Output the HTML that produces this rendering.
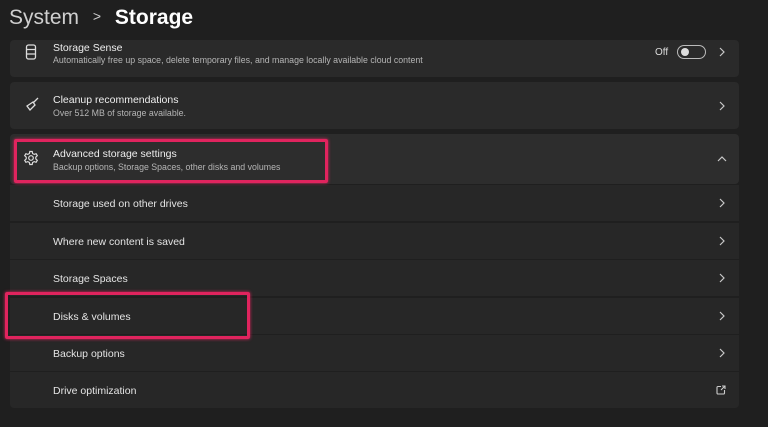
<!DOCTYPE html>
<html><head><style>
body{margin:0;width:768px;height:427px;background:#1f1f1f;font-family:"Liberation Sans",sans-serif;color:#e6e6e6;position:relative;overflow:hidden}
.t{position:absolute;left:9px;top:6px;font-size:21px;color:#cfcfcf}
.t b{font-weight:bold;color:#fff}
.card{position:absolute;left:10px;width:729px;background:#2a2a2a;border-radius:4px}
.ttl{position:absolute;left:43px;font-size:10.5px;color:#eee}
.sub{position:absolute;left:43px;font-size:8.8px;color:#b5b5b5}
.row{position:absolute;left:10px;width:729px;height:36px;background:#272727}
.row span{position:absolute;left:43px;top:13px;font-size:10.5px;color:#e4e4e4}
.chev{position:absolute;right:14px;width:6px;height:10px}
.box{position:absolute;border:3px solid #e0245e;border-radius:2px;box-shadow:0 0 3px #e0245e}
</style></head><body>
<svg width="0" height="0" style="position:absolute"><defs><symbol id="c" viewBox="0 0 6 10"><path d="M1 1l4 4-4 4" fill="none" stroke="#c8c8c8" stroke-width="1.2"/></symbol></defs></svg>
<div class="t">System <span style="font-size:14px;margin:0 8px;position:relative;top:-3px">&gt;</span> <b>Storage</b></div>

<div class="card" style="top:40px;height:37px">
<svg style="position:absolute;left:15px;top:4px" width="12" height="16" viewBox="0 0 12 16" fill="none" stroke="#ddd" stroke-width="1.3"><rect x="1.5" y="1" width="9" height="14" rx="2"/><path d="M1.5 5.5h9M1.5 10h9"/></svg>
<div class="ttl" style="top:2px">Storage Sense</div>
<div class="sub" style="top:15px">Automatically free up space, delete temporary files, and manage locally available cloud content</div>
<div style="position:absolute;left:645px;top:7px;font-size:10px;color:#ddd">Off</div>
<div style="position:absolute;left:667px;top:5px;width:27px;height:12px;border:1px solid #bbb;border-radius:7px"><div style="position:absolute;left:3px;top:2px;width:8px;height:8px;border-radius:50%;background:#ddd"></div></div>
<svg class="chev" style="top:7px"><use href="#c"/></svg>
</div>

<div class="card" style="top:82px;height:47px">
<svg style="position:absolute;left:14px;top:14px" width="16" height="16" viewBox="0 0 16 16" fill="none" stroke="#ddd" stroke-width="1.3"><path d="M14 2L9 7M9 6l-6 4 3 4 5-5z"/></svg>
<div class="ttl" style="top:12px">Cleanup recommendations</div>
<div class="sub" style="top:26px">Over 512 MB of storage available.</div>
<svg class="chev" style="top:19px"><use href="#c"/></svg>
</div>

<div class="card" style="top:134px;height:50px;background:#2d2d2d">
<svg style="position:absolute;left:13px;top:16px" width="16" height="16" viewBox="0 0 16 16" fill="none" stroke="#ddd" stroke-width="1.2"><circle cx="8" cy="8" r="2.3"/><path d="M6.8 1.5h2.4l.4 2 1.6.9 1.9-.7 1.2 2-1.5 1.4v1.8l1.5 1.4-1.2 2-1.9-.7-1.6.9-.4 2H6.8l-.4-2-1.6-.9-1.9.7-1.2-2 1.5-1.4V7.1L1.7 5.7l1.2-2 1.9.7 1.6-.9z"/></svg>
<div class="ttl" style="top:14px">Advanced storage settings</div>
<div class="sub" style="top:28px">Backup options, Storage Spaces, other disks and volumes</div>
<svg style="position:absolute;right:12px;top:22px" width="10" height="6" viewBox="0 0 10 6"><path d="M1 5l4-4 4 4" fill="none" stroke="#c8c8c8" stroke-width="1.2"/></svg>
</div>

<div class="row" style="top:185px"><span>Storage used on other drives</span><svg class="chev" style="top:13px"><use href="#c"/></svg></div>
<div class="row" style="top:223px"><span>Where new content is saved</span><svg class="chev" style="top:13px"><use href="#c"/></svg></div>
<div class="row" style="top:260px"><span>Storage Spaces</span><svg class="chev" style="top:13px"><use href="#c"/></svg></div>
<div class="row" style="top:298px"><span>Disks &amp; volumes</span><svg class="chev" style="top:13px"><use href="#c"/></svg></div>
<div class="row" style="top:335px"><span>Backup options</span><svg class="chev" style="top:13px"><use href="#c"/></svg></div>
<div class="row" style="top:372px;height:36px;border-radius:0 0 4px 4px"><span>Drive optimization</span>
<svg style="position:absolute;right:13px;top:13px" width="10" height="10" viewBox="0 0 10 10" fill="none" stroke="#ccc" stroke-width="1.1"><path d="M5 1.5H2a1 1 0 0 0-1 1V8a1 1 0 0 0 1 1h5.5a1 1 0 0 0 1-1V5M5 5l4-4M6 1h3v3"/></svg></div>

<div class="box" style="left:14px;top:139px;width:308px;height:38px"></div>
<div class="box" style="left:5px;top:292px;width:239px;height:41px"></div>
</body></html>
